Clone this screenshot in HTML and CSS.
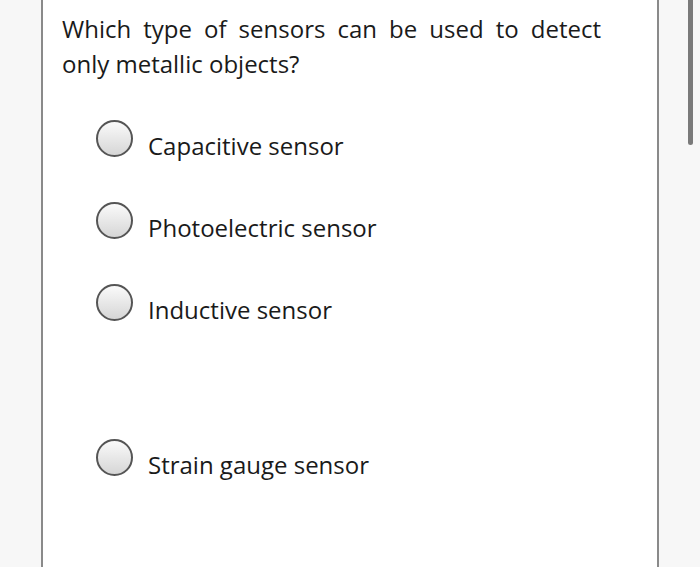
FILE: index.html
```html
<!DOCTYPE html>
<html>
<head>
<meta charset="utf-8">
<link rel="stylesheet" href="styles.css">
</head>
<body>
<div class="page">
  <div class="side"></div>
  <div class="card">
    <p class="question">Which type of sensors can be used to detect only metallic objects?</p>
    <ul class="options">
      <li class="option"><span class="radio"></span><span class="label">Capacitive sensor</span></li>
      <li class="option"><span class="radio"></span><span class="label">Photoelectric sensor</span></li>
      <li class="option"><span class="radio"></span><span class="label">Inductive sensor</span></li>
      <li class="option option-far"><span class="radio"></span><span class="label">Strain gauge sensor</span></li>
    </ul>
  </div>
  <div class="side side-right"><div class="scrollbar"></div></div>
</div>
</body>
</html>
```
FILE: styles.css
```css
html, body {
  margin: 0;
  padding: 0;
  background: #f7f7f7;
}
body {
  font-family: "Open Sans", "Noto Sans", sans-serif;
  color: #1a1a1a;
  overflow: hidden;
}
.page {
  display: flex;
  width: 700px;
  height: 567px;
}
.side {
  width: 41px;
  flex: none;
  background: #f7f7f7;
}
.side-right {
  width: 41px;
  position: relative;
}
.scrollbar {
  position: absolute;
  left: 29px;
  top: 0;
  width: 5px;
  height: 145px;
  background: #7a7a7a;
  border-radius: 0 0 3px 3px;
}
.card {
  flex: none;
  background: #fff;
  border-left: 2px solid #8a8a8a;
  border-right: 2px solid #8a8a8a;
  padding: 11px 56px 0 19px;
  box-sizing: border-box;
  width: 618px;
}
.question {
  margin: 0;
  font-size: 24px;
  line-height: 35px;
  text-align: justify;
}
.options {
  list-style: none;
  margin: 0;
  padding: 44px 0 0 34px;
}
.option {
  display: flex;
  align-items: center;
  height: 40px;
  margin-bottom: 42px;
}
.option-far {
  margin-top: 115px;
}
.radio {
  flex: none;
  width: 33px;
  height: 33px;
  border: 2px solid #555;
  border-radius: 50%;
  background: linear-gradient(#fafafa, #d6d6d6);
  margin-right: 15px;
  margin-top: -14px;
}
.label {
  font-size: 24px;
}
```
